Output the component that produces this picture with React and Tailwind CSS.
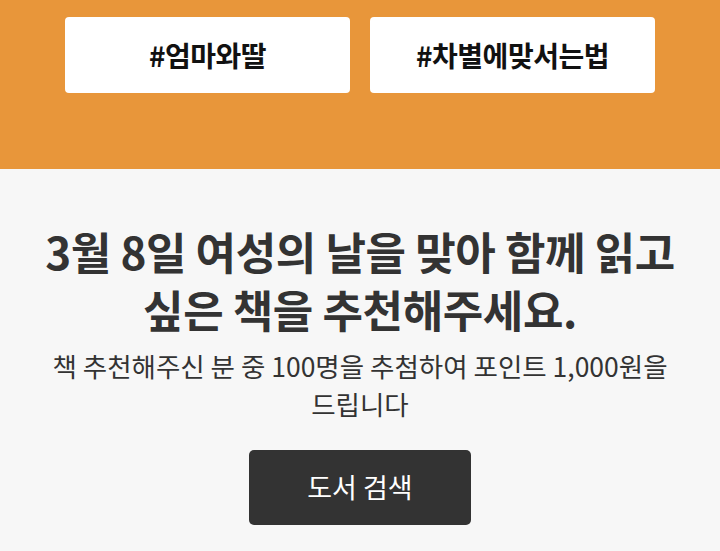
const tags = ['#엄마와딸', '#차별에맞서는법']

export default function App() {
  return (
    <div
      className="min-h-[551px] w-[720px] bg-[#f7f7f7]"
      style={{ fontFamily: '"Noto Sans CJK KR", "Noto Sans", sans-serif' }}
    >
      <section className="h-[169px] bg-[#e8963a] pt-[17px]">
        <div className="flex justify-center gap-[20px]">
          {tags.map((tag) => (
            <button
              key={tag}
              className="flex h-[76px] w-[285px] items-center justify-center rounded-[4px] bg-white text-[28px] font-bold tracking-[-0.5px] text-[#111]"
            >
              {tag}
            </button>
          ))}
        </div>
      </section>

      <section className="flex flex-col items-center px-2 pt-[53px] text-center">
        <h1 className="whitespace-nowrap text-[44px] font-bold leading-[58px] tracking-[-0.4px] text-[#333]">
          3월 8일 여성의 날을 맞아 함께 읽고
          <br />
          싶은 책을 추천해주세요.
        </h1>
        <p className="mt-[9px] whitespace-nowrap text-[26.5px] leading-[38px] text-[#333]">
          책 추천해주신 분 중 100명을 추첨하여 포인트 1,000원을
          <br />
          드립니다
        </p>
        <button className="mt-[27px] flex h-[75px] w-[222px] items-center justify-center rounded-[5px] bg-[#333] text-[27px] text-white">
          도서 검색
        </button>
      </section>
    </div>
  )
}
